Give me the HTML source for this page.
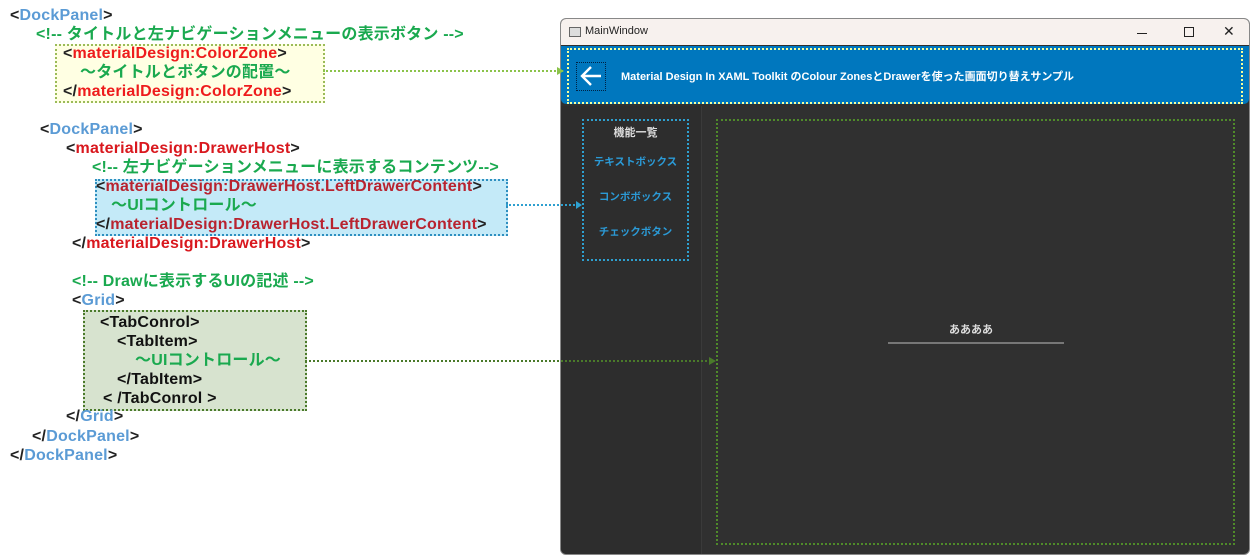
<!DOCTYPE html>
<html><head><meta charset="utf-8"><style>
body{margin:0;width:1250px;height:554px;background:#fff;position:relative;overflow:hidden;font-family:"Liberation Sans","Noto Sans CJK JP",sans-serif}
.l{position:absolute;font-size:16px;line-height:19px;white-space:nowrap;color:#222;font-weight:bold;letter-spacing:0.2px}
.b{color:#5b9bd5}.g{color:#1aa94f}.r{color:#ee1c1c}.dr{color:#b8232f}.k{color:#111;font-weight:bold}
.box{position:absolute}
.w{position:absolute;font-family:"Liberation Sans","Noto Sans CJK JP",sans-serif;font-weight:bold}
.c{position:absolute;z-index:5}
</style></head><body>
<div class="box" style="left:55px;top:44px;width:266px;height:55px;background:#ffffe3;border:2px dotted #9bbb59"></div>
<div class="box" style="left:95px;top:179px;width:409px;height:53px;background:#c4eaf8;border:2px dotted #2e8fc0"></div>
<div class="box" style="left:83px;top:310px;width:220px;height:97px;background:#d7e3cf;border:2px dotted #4a7a2a"></div>

<div class="l" style="left:10px;top:6px">&lt;<span class="b">DockPanel</span>&gt;</div>
<div class="l g" style="left:36px;top:25px">&lt;!-- タイトルと左ナビゲーションメニューの表示ボタン --&gt;</div>
<div class="l" style="left:63px;top:44px">&lt;<span class="r">materialDesign:ColorZone</span>&gt;</div>
<div class="l g" style="left:80px;top:63px">～タイトルとボタンの配置～</div>
<div class="l" style="left:63px;top:82px">&lt;/<span class="r">materialDesign:ColorZone</span>&gt;</div>
<div class="l" style="left:40px;top:120px">&lt;<span class="b">DockPanel</span>&gt;</div>
<div class="l" style="left:66px;top:139px">&lt;<span class="r" style="color:#d9181e">materialDesign:DrawerHost</span>&gt;</div>
<div class="l g" style="left:92px;top:158px">&lt;!-- 左ナビゲーションメニューに表示するコンテンツ--&gt;</div>
<div class="l" style="left:96px;top:177px">&lt;<span class="dr">materialDesign:DrawerHost.LeftDrawerContent</span>&gt;</div>
<div class="l g" style="left:111px;top:196px">～UIコントロール～</div>
<div class="l" style="left:96px;top:215px">&lt;/<span class="dr">materialDesign:DrawerHost.LeftDrawerContent</span>&gt;</div>
<div class="l" style="left:72px;top:234px">&lt;/<span class="r" style="color:#d9181e">materialDesign:DrawerHost</span>&gt;</div>
<div class="l g" style="left:72px;top:272px">&lt;!-- Drawに表示するUIの記述 --&gt;</div>
<div class="l" style="left:72px;top:291px">&lt;<span class="b">Grid</span>&gt;</div>
<div class="l k" style="left:100px;top:313px">&lt;TabConrol&gt;</div>
<div class="l k" style="left:117px;top:332px">&lt;TabItem&gt;</div>
<div class="l g" style="left:135px;top:351px">～UIコントロール～</div>
<div class="l k" style="left:117px;top:370px">&lt;/TabItem&gt;</div>
<div class="l k" style="left:103px;top:389px">&lt; /TabConrol &gt;</div>
<div class="l" style="left:66px;top:407px">&lt;/<span class="b">Grid</span>&gt;</div>
<div class="l" style="left:32px;top:427px">&lt;/<span class="b">DockPanel</span>&gt;</div>
<div class="l" style="left:10px;top:446px">&lt;/<span class="b">DockPanel</span>&gt;</div>

<!-- window -->
<div style="position:absolute;left:560px;top:18px;width:688px;height:535px;background:#303030;border:1px solid #888;border-radius:6px;overflow:hidden">
  <div style="position:absolute;left:0;top:0;width:688px;height:26px;background:#f7f1ee"></div>
  <div style="position:absolute;left:8px;top:8px;width:10px;height:8px;border:1px solid #666;background:#ddd"></div>
  <div class="w" style="left:24px;top:6px;font-size:11px;font-weight:normal;color:#222">MainWindow</div>
  <div style="position:absolute;left:576px;top:14px;width:10px;border-top:1px solid #222"></div>
  <div style="position:absolute;left:623px;top:8px;width:8px;height:8px;border:1px solid #222"></div>
  <div class="w" style="left:662px;top:4px;font-size:14px;font-weight:normal;color:#222">✕</div>
  <div style="position:absolute;left:0;top:27px;width:688px;height:58px;background:#0077be;border-radius:0 0 5px 5px"></div>
  <div style="position:absolute;left:6px;top:29px;width:672px;height:52px;border:2px dotted #f4ff9c"></div>
  <div style="position:absolute;left:15px;top:43px;width:28px;height:27px;border:1px dotted #024"></div>
  <svg style="position:absolute;left:17px;top:45px" width="26" height="24" viewBox="0 0 26 24"><path d="M23 12H4M13 3L4 12l9 9" stroke="#fff" stroke-width="2.4" fill="none"/></svg>
  <div class="w" style="left:60px;top:49px;font-size:11px;color:#fff">Material Design In XAML Toolkit のColour ZonesとDrawerを使った画面切り替えサンプル</div>
  <div style="position:absolute;left:0;top:87px;width:140px;height:450px;background:#2d2d2d;border-right:1px solid #3a3a3a"></div>
  <div style="position:absolute;left:21px;top:100px;width:103px;height:138px;border:2px dotted #2ea0d0"></div>
  <div class="w" style="left:21px;top:105px;width:107px;text-align:center;font-size:11px;color:#ddd">機能一覧</div>
  <div class="w" style="left:21px;top:135px;width:107px;text-align:center;font-size:10.5px;color:#2b9ad6">テキストボックス</div>
  <div class="w" style="left:21px;top:170px;width:107px;text-align:center;font-size:10.5px;color:#2b9ad6">コンボボックス</div>
  <div class="w" style="left:21px;top:205px;width:107px;text-align:center;font-size:10.5px;color:#2b9ad6">チェックボタン</div>
  <div style="position:absolute;left:155px;top:100px;width:515px;height:422px;border:2px dotted #4f8a2a"></div>
  <div class="w" style="left:388px;top:302px;font-size:11px;color:#ddd">ああああ</div>
  <div style="position:absolute;left:327px;top:323px;width:176px;border-top:2px solid #777"></div>
</div>

<!-- connectors on top -->
<div class="c" style="left:323px;top:70px;width:240px;border-top:2px dotted #8bc34a"></div>
<div class="c" style="left:557px;top:67px;width:0;height:0;border-left:7px solid #8bc34a;border-top:4px solid transparent;border-bottom:4px solid transparent"></div>
<div class="c" style="left:506px;top:204px;width:72px;border-top:2px dotted #2ea0d0"></div>
<div class="c" style="left:576px;top:201px;width:0;height:0;border-left:6px solid #2ea0d0;border-top:4px solid transparent;border-bottom:4px solid transparent"></div>
<div class="c" style="left:305px;top:360px;width:406px;border-top:2px dotted #4a7a2a"></div>
<div class="c" style="left:709px;top:357px;width:0;height:0;border-left:7px solid #4a7a2a;border-top:4px solid transparent;border-bottom:4px solid transparent"></div>
</body></html>
